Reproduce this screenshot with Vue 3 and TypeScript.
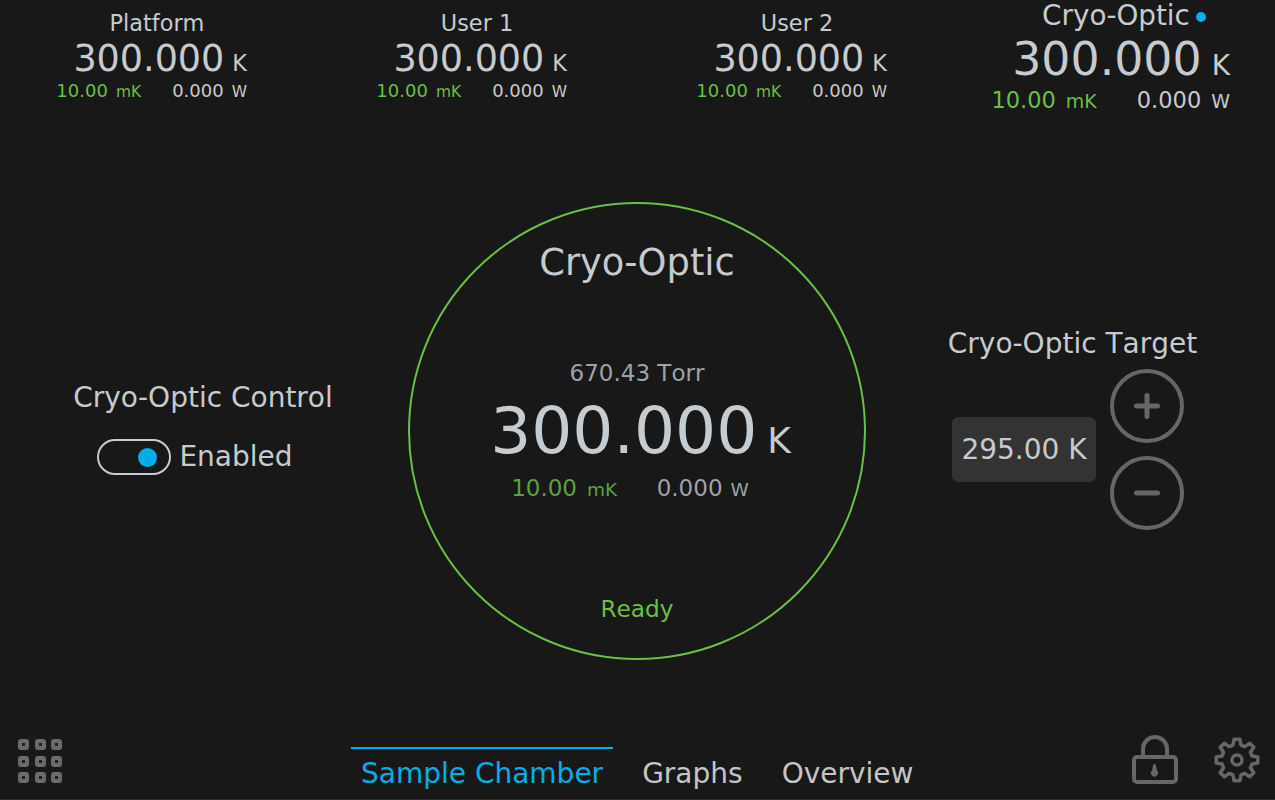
<script setup lang="ts">
interface Reading {
  name: string
  temp: string
  stability: string
  power: string
  selected?: boolean
}

const readings: Reading[] = [
  { name: 'Platform', temp: '300.000', stability: '10.00', power: '0.000' },
  { name: 'User 1', temp: '300.000', stability: '10.00', power: '0.000' },
  { name: 'User 2', temp: '300.000', stability: '10.00', power: '0.000' },
  { name: 'Cryo-Optic', temp: '300.000', stability: '10.00', power: '0.000', selected: true },
]

const tabs = ['Sample Chamber', 'Graphs', 'Overview']
const dots = Array.from({ length: 9 }, (_, i) => i)

// 8 tooth gear outline, centred on 24,24
function gearPath(): string {
  const pt = (r: number, deg: number) => {
    const a = ((deg - 90) * Math.PI) / 180
    return `${(24 + r * Math.cos(a)).toFixed(2)} ${(24 + r * Math.sin(a)).toFixed(2)}`
  }
  const parts: string[] = []
  for (let i = 0; i < 8; i++) {
    const c = i * 45
    parts.push(pt(15.5, c - 15), pt(21, c - 8), pt(21, c + 8), pt(15.5, c + 15))
  }
  return `M${parts.join('L')}Z`
}
const gear = gearPath()
</script>

<template>
  <div class="screen">
    <header class="readings">
      <div v-for="r in readings" :key="r.name" class="reading" :class="{ selected: r.selected }">
        <div class="reading-name">
          {{ r.name }}<span v-if="r.selected" class="dot"></span>
        </div>
        <div class="reading-temp">{{ r.temp }}<span class="unit">K</span></div>
        <div class="reading-sub">
          <span class="green">{{ r.stability }}<span class="sub-unit">mK</span></span>
          <span class="power">{{ r.power }}<span class="sub-unit">W</span></span>
        </div>
      </div>
    </header>

    <main class="main">
      <section class="control">
        <div class="panel-title">Cryo-Optic Control</div>
        <div class="toggle-row">
          <span class="toggle"><span class="knob"></span></span>
          <span>Enabled</span>
        </div>
      </section>

      <section class="gauge">
        <div class="gauge-name">Cryo-Optic</div>
        <div class="gauge-pressure">670.43 Torr</div>
        <div class="gauge-temp">300.000<span class="unit">K</span></div>
        <div class="gauge-sub">
          <span class="green">10.00<span class="sub-unit">mK</span></span>
          <span class="power">0.000<span class="sub-unit">W</span></span>
        </div>
        <div class="gauge-status">Ready</div>
      </section>

      <section class="target">
        <div class="panel-title">Cryo-Optic Target</div>
        <div class="target-row">
          <div class="target-value">295.00 K</div>
          <div class="target-buttons">
            <button class="round-btn" type="button">
              <svg width="30" height="30" viewBox="0 0 30 30">
                <path d="M15 4.500v21M4.500 15h21" />
              </svg>
            </button>
            <button class="round-btn" type="button">
              <svg width="30" height="30" viewBox="0 0 30 30">
                <path d="M4.500 15h21" />
              </svg>
            </button>
          </div>
        </div>
      </section>
    </main>

    <footer class="footer">
      <div class="grid-icon">
        <span v-for="d in dots" :key="d" class="grid-dot"></span>
      </div>
      <nav class="tabs">
        <div v-for="(t, i) in tabs" :key="t" class="tab" :class="{ active: i === 0 }">{{ t }}</div>
      </nav>
      <div class="footer-icons">
        <svg class="lock" width="48" height="52" viewBox="0 0 48 52">
          <path d="M12 23V15A12 12 0 0 1 36 15V23" />
          <rect x="3" y="23" width="42" height="25" rx="3" />
          <path class="keyhole" d="M22 31.500a1.500 1.500 0 0 1 3 0l1 5a3.500 3.500 0 1 1-5 0z" />
        </svg>
        <svg class="gear" width="48" height="48" viewBox="0 0 48 48">
          <path :d="gear" />
          <circle cx="24" cy="24" r="5" />
        </svg>
      </div>
    </footer>
  </div>
</template>

<style>
html,
body {
  margin: 0;
  background: #181818;
}
</style>

<style scoped>
.screen {
  width: 1275px;
  height: 800px;
  display: flex;
  flex-direction: column;
  box-sizing: border-box;
  overflow: hidden;
  background: #181818;
  color: #c5cbcf;
  font-family: "DejaVu Sans", sans-serif;
  font-kerning: none;
}

.readings {
  height: 130px;
  display: grid;
  grid-template-columns: 320px 320px 320px 315px;
}

.reading {
  display: flex;
  flex-direction: column;
  align-items: flex-end;
  padding: 10px 73px 0 0;
}

.reading-name {
  align-self: center;
  margin-right: -67px;
  font-size: 22.400px;
  line-height: 27px;
}

.reading-temp {
  font-size: 36.500px;
  line-height: 44px;
  white-space: nowrap;
}

.unit {
  line-height: 1;
}

.reading-temp .unit {
  margin-left: 8px;
  font-size: 22.400px;
}

.reading-sub {
  display: flex;
  gap: 31px;
  font-size: 18px;
  line-height: 20px;
  white-space: nowrap;
}

.sub-unit {
  margin-left: 8px;
  font-size: 15.500px;
  line-height: 1;
}

.green {
  color: #6abf45;
}

.reading.selected {
  padding: 0 45px 0 0;
}

.reading.selected .reading-name {
  margin-right: -58px;
  font-size: 27.800px;
  line-height: 32px;
}

.dot {
  display: inline-block;
  width: 10px;
  height: 10px;
  margin-left: 6px;
  border-radius: 50%;
  background: #00aee8;
  vertical-align: 3px;
}

.reading.selected .reading-temp {
  font-size: 45.800px;
  line-height: 54px;
}

.reading.selected .reading-temp .unit {
  margin-left: 10px;
  font-size: 28px;
}

.reading.selected .reading-sub {
  gap: 40px;
  font-size: 22.500px;
  line-height: 28px;
}

.reading.selected .sub-unit {
  margin-left: 10px;
  font-size: 19px;
}

.main {
  flex: 1;
  display: flex;
  align-items: center;
  padding-top: 4px;
}

.control {
  width: 408px;
  flex: none;
  box-sizing: border-box;
  display: flex;
  flex-direction: column;
  align-items: center;
  padding: 0 2px 6px 0;
  font-size: 28px;
  line-height: 34px;
}

.panel-title {
  white-space: nowrap;
}

.toggle-row {
  display: flex;
  align-items: center;
  gap: 8px;
  margin-top: 24px;
  padding-right: 16px;
}

.toggle {
  width: 74px;
  height: 36px;
  box-sizing: border-box;
  display: flex;
  align-items: center;
  justify-content: flex-end;
  padding-right: 12px;
  border: 2px solid #c5cbcf;
  border-radius: 18px;
}

.knob {
  width: 19px;
  height: 19px;
  border-radius: 50%;
  background: #00aee8;
}

.gauge {
  width: 458px;
  height: 458px;
  flex: none;
  box-sizing: border-box;
  display: flex;
  flex-direction: column;
  align-items: center;
  border: 2px solid #6abf45;
  border-radius: 50%;
}

.gauge-name {
  margin-top: 37px;
  font-size: 36.800px;
  line-height: 44px;
}

.gauge-pressure {
  margin-top: 74px;
  padding-bottom: 1px;
  font-size: 23px;
  line-height: 28px;
  color: #9ea3a7;
}

.gauge-temp {
  font-size: 64.600px;
  line-height: 86px;
  white-space: nowrap;
  padding-left: 7px;
}

.gauge-temp .unit {
  margin-left: 10px;
  font-size: 36px;
}

.gauge-sub {
  display: flex;
  gap: 39.500px;
  padding-right: 14px;
  font-size: 23px;
  line-height: 28px;
  color: #9ea3a7;
}

.gauge-sub .green {
  color: #5ca23c;
}

.gauge-sub .sub-unit {
  margin-left: 10px;
  font-size: 18.500px;
}

.gauge-sub .power .sub-unit {
  margin-left: 8px;
}

.gauge-status {
  margin-top: 94px;
  font-size: 23.200px;
  line-height: 26px;
  color: #6abf45;
}

.target {
  flex: 1;
  display: flex;
  flex-direction: column;
  align-items: center;
  padding: 0 0 5px 4px;
  font-size: 28px;
  line-height: 34px;
}

.target-row {
  display: flex;
  align-items: center;
  gap: 14px;
  margin: 8px 9px 0 0;
}

.target-value {
  width: 144px;
  height: 65px;
  display: flex;
  align-items: center;
  justify-content: center;
  border-radius: 6px;
  background: #333333;
}

.target-buttons {
  display: flex;
  flex-direction: column;
  gap: 13px;
}

.round-btn {
  width: 74px;
  height: 74px;
  padding: 0;
  display: flex;
  align-items: center;
  justify-content: center;
  box-sizing: border-box;
  border: 4px solid #666666;
  border-radius: 50%;
  background: transparent;
}

.round-btn path {
  fill: none;
  stroke: #666666;
  stroke-width: 5;
  stroke-linecap: round;
}

.footer {
  height: 72px;
  flex: none;
  position: relative;
  display: flex;
  align-items: flex-start;
  border-bottom: 1px solid #2e2e2e;
  box-sizing: border-box;
}

.grid-icon {
  position: absolute;
  left: 18px;
  top: 11px;
  display: grid;
  grid-template-columns: repeat(3, 11px);
  grid-auto-rows: 11px;
  gap: 5.500px;
}

.grid-dot {
  box-sizing: border-box;
  border: 4px solid #6a6a6a;
  border-radius: 3px;
  background: #222222;
}

.tabs {
  display: flex;
  gap: 19px;
  margin: 19px 0 0 351px;
  font-size: 28px;
  line-height: 50px;
}

.tab {
  padding: 0 10px;
  border-top: 2px solid transparent;
  color: #c5c5c5;
}

.tab.active {
  border-top-color: #00aee8;
  color: #00aee8;
}

.footer-icons {
  position: absolute;
  right: 14px;
  top: 6px;
  display: flex;
  align-items: flex-start;
  gap: 34px;
}

.lock,
.gear {
  fill: none;
  stroke: #666666;
  stroke-width: 4;
  stroke-linejoin: round;
}

.gear {
  margin-top: 2px;
  stroke-width: 3.500;
}

.keyhole {
  fill: #666666;
  stroke: none;
}
</style>
